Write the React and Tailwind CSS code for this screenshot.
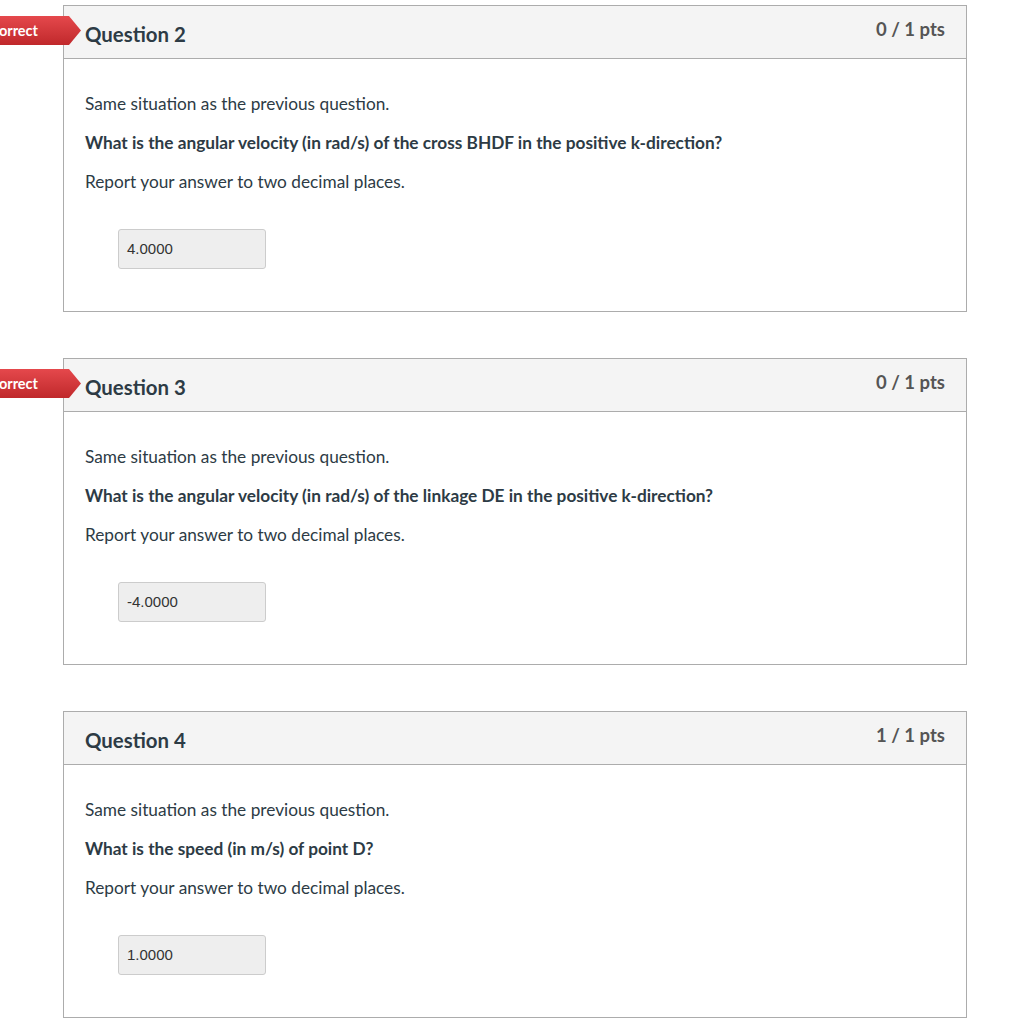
const questions = [
    {
        number: 2,
        points: '0 / 1 pts',
        incorrect: true,
        prompt: 'What is the angular velocity (in rad/s) of the cross BHDF in the positive k-direction?',
        answer: '4.0000',
    },
    {
        number: 3,
        points: '0 / 1 pts',
        incorrect: true,
        prompt: 'What is the angular velocity (in rad/s) of the linkage DE in the positive k-direction?',
        answer: '-4.0000',
    },
    {
        number: 4,
        points: '1 / 1 pts',
        incorrect: false,
        prompt: 'What is the speed (in m/s) of point D?',
        answer: '1.0000',
    },
];

function IncorrectBadge() {
    return (
        <div className="absolute top-[10px] right-[calc(100%-17px)] h-[29px] flex items-center pl-[10px] pr-[43px] bg-gradient-to-b from-[#e5484c] to-[#c0282b] text-white text-[14.5px] font-bold [clip-path:polygon(0_0,calc(100%-12px)_0,100%_50%,calc(100%-12px)_100%,0_100%)]">
            Incorrect
        </div>
    );
}

function QuestionCard({ q }) {
    return (
        <div className="relative ml-[63px] w-[904px] border border-[#acacac] bg-white">
            {q.incorrect && <IncorrectBadge />}
            <div className="h-[53px] bg-[#f4f4f4] border-b border-[#acacac] flex justify-between pl-[21px] pr-[21px]">
                <h2 className="pt-[14px] text-[20.4px] font-bold text-[#2d3b45] leading-[28px]">Question {q.number}</h2>
                <div className="pt-[11px] text-[18.5px] font-bold text-[#555] leading-[24px]">{q.points}</div>
            </div>
            <div className="pt-[33px] pb-[42px] pl-[21px] text-[17.25px] leading-[24px] text-[#2d3b45]">
                <p className="mb-[15px]">Same situation as the previous question.</p>
                <p className="mb-[15px] font-bold">{q.prompt}</p>
                <p>Report your answer to two decimal places.</p>
                <div className="mt-[35px] ml-[33px] w-[148px] h-[40px] flex items-center px-[8px] bg-[#eeeeee] border border-[#cccccc] rounded-[3px] text-[15px] text-[#333] font-['Liberation_Sans',Arial,sans-serif]">
                    {q.answer}
                </div>
            </div>
        </div>
    );
}

export default function App() {
    return (
        <div className="min-h-screen bg-white pt-[5px] overflow-hidden font-['Lato','Noto_Sans',sans-serif]">
            <div className="flex flex-col gap-[46px]">
                {questions.map((q) => (
                    <QuestionCard key={q.number} q={q} />
                ))}
            </div>
        </div>
    );
}
